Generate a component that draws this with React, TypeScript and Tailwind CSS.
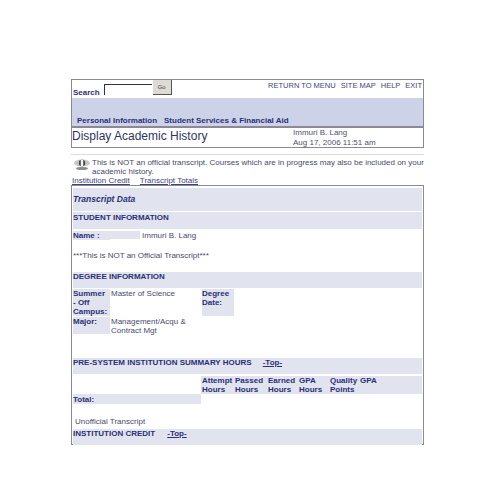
import React from 'react';

function Band({ className = '', children }: { className?: string; children: React.ReactNode }) {
  return <div className={`bg-[#e1e4ef] font-bold text-[#2b2f75] ${className}`}>{children}</div>;
}

const hoursHeaders = [
  { w: 'w-[33px]', a: 'Attempt', b: 'Hours' },
  { w: 'w-[33px]', a: 'Passed', b: 'Hours' },
  { w: 'w-[31px]', a: 'Earned', b: 'Hours' },
  { w: 'w-[31px]', a: 'GPA', b: 'Hours' },
  { w: 'w-[30px]', a: 'Quality', b: 'Points' },
];

export default function App() {
  return (
    <div className="h-[495px] w-[495px] overflow-hidden bg-white pl-[71px] pt-[79px] font-['Liberation_Sans',Arial,sans-serif] text-[8px] leading-[9px] text-[#4a4a6a]">
      <div className="w-[353px]">
        {/* Top nav */}
        <div className="h-[47px] border border-b-0 border-[#8a8a96] bg-white">
          <div className="flex h-[18px] items-start justify-between pr-px">
            <div className="flex items-start">
              <span className="mt-[8px] ml-px font-bold text-[#2b2f75]">Search</span>
              <div className="mt-[4px] ml-[4px] h-[11px] w-[48px] border-t border-l border-[#333333]" />
              <div className="ml-px flex h-[15px] w-[19px] items-center justify-center border-r border-b border-[#555555] bg-[#dddbd4] text-[6px] text-[#444444]">
                Go
              </div>
            </div>
            <div className="mt-px flex gap-[5px] text-[7.5px] text-[#3f437d]">
              <span>RETURN TO MENU</span>
              <span>SITE MAP</span>
              <span>HELP</span>
              <span>EXIT</span>
            </div>
          </div>
          <div className="flex h-[28px] items-end gap-[7px] bg-[#ccd3e8] pb-px pl-[5px] font-bold text-[#2b2f75]">
            <span>Personal Information</span>
            <span>Student Services &amp; Financial Aid</span>
          </div>
        </div>

        {/* Title */}
        <div className="flex h-[22px] items-start border border-t-2 border-[#8a8a96]">
          <h1 className="w-[221px] text-[12px] leading-[16px] text-[#30335f]">Display Academic History</h1>
          <div className="leading-[10px] text-[#50506e]">
            <div>Immuri B. Lang</div>
            <div>Aug 17, 2006 11:51 am</div>
          </div>
        </div>

        <div className="mt-[6px] h-px bg-[#dcdcdc]" />

        {/* Notice */}
        <div className="mt-[3px] flex items-start">
          <svg className="ml-[2px] shrink-0" width="18" height="13" viewBox="0 0 18 13">
            <ellipse cx="9" cy="5" rx="8" ry="3.6" fill="#c4c6c8" />
            <circle cx="9" cy="5" r="3.2" fill="#45474a" />
            <rect x="7.8" y="2" width="2.4" height="6" fill="#f4f4f4" />
            <ellipse cx="9" cy="10.5" rx="6" ry="1.6" fill="#8b8d90" />
          </svg>
          <p className="ml-px w-[332px] leading-[9px]">
            This is NOT an official transcript. Courses which are in progress may also be included on your academic history.
          </p>
        </div>

        <div className="flex gap-[10px] pl-px leading-[9px] text-[#3f437d] underline">
          <span>Institution Credit</span>
          <span>Transcript Totals</span>
        </div>

        {/* Transcript data */}
        <div className="h-[260px] border border-[#8a8a96] px-px pt-[2px] leading-[9px]">
          <Band className="flex h-[23px] items-center text-[8.5px] italic">Transcript Data</Band>
          <Band className="mt-px h-[17px] pt-px">STUDENT INFORMATION</Band>

          <div className="mt-px flex h-[10px] items-center">
            <span className="w-[37px] bg-[#e1e4ef] font-bold text-[#2b2f75]">Name :</span>
            <span className="h-[8px] w-[30px] bg-[#e1e4ef]" />
            <span className="ml-[2px]">Immuri B. Lang</span>
          </div>
          <div className="mt-[11px]">***This is NOT an Official Transcript***</div>

          <Band className="mt-[12px] h-[16px]">DEGREE INFORMATION</Band>

          <div className="mt-px flex">
            <div className="h-[27px] w-[37px] bg-[#e1e4ef] font-bold text-[#2b2f75]">
              Summer
              <br />
              - Off
              <br />
              Campus:
            </div>
            <div className="ml-px w-[91px]">Master of Science</div>
            <div className="h-[27px] w-[32px] bg-[#e1e4ef] font-bold text-[#2b2f75]">
              Degree Date:
            </div>
          </div>
          <div className="mt-px flex">
            <div className="h-[17px] w-[37px] bg-[#e1e4ef] font-bold text-[#2b2f75]">Major:</div>
            <div className="ml-px w-[91px]">Management/Acqu &amp; Contract Mgt</div>
          </div>

          <Band className="mt-[23px] flex h-[16px] gap-[11px]">
            <span>PRE-SYSTEM INSTITUTION SUMMARY HOURS</span>
            <span className="underline">-Top-</span>
          </Band>

          <div className="mt-[2px] flex h-[18px]">
            <div className="w-[128px]" />
            <div className="flex flex-1 bg-[#e1e4ef] font-bold text-[#2b2f75]">
              {hoursHeaders.map((h) => (
                <div key={h.a} className={`${h.w} pl-px`}>
                  {h.a}
                  <br />
                  {h.b}
                </div>
              ))}
              <div className="flex-1 pl-px">GPA</div>
            </div>
          </div>
          <Band className="h-[10px] w-[128px] pt-px">Total:</Band>

          <div className="mt-[13px] pl-[2px]">Unofficial Transcript</div>

          <Band className="mt-[3px] flex h-[16px] gap-[12px]">
            <span>INSTITUTION CREDIT</span>
            <span className="underline">-Top-</span>
          </Band>
        </div>
      </div>
    </div>
  );
}
